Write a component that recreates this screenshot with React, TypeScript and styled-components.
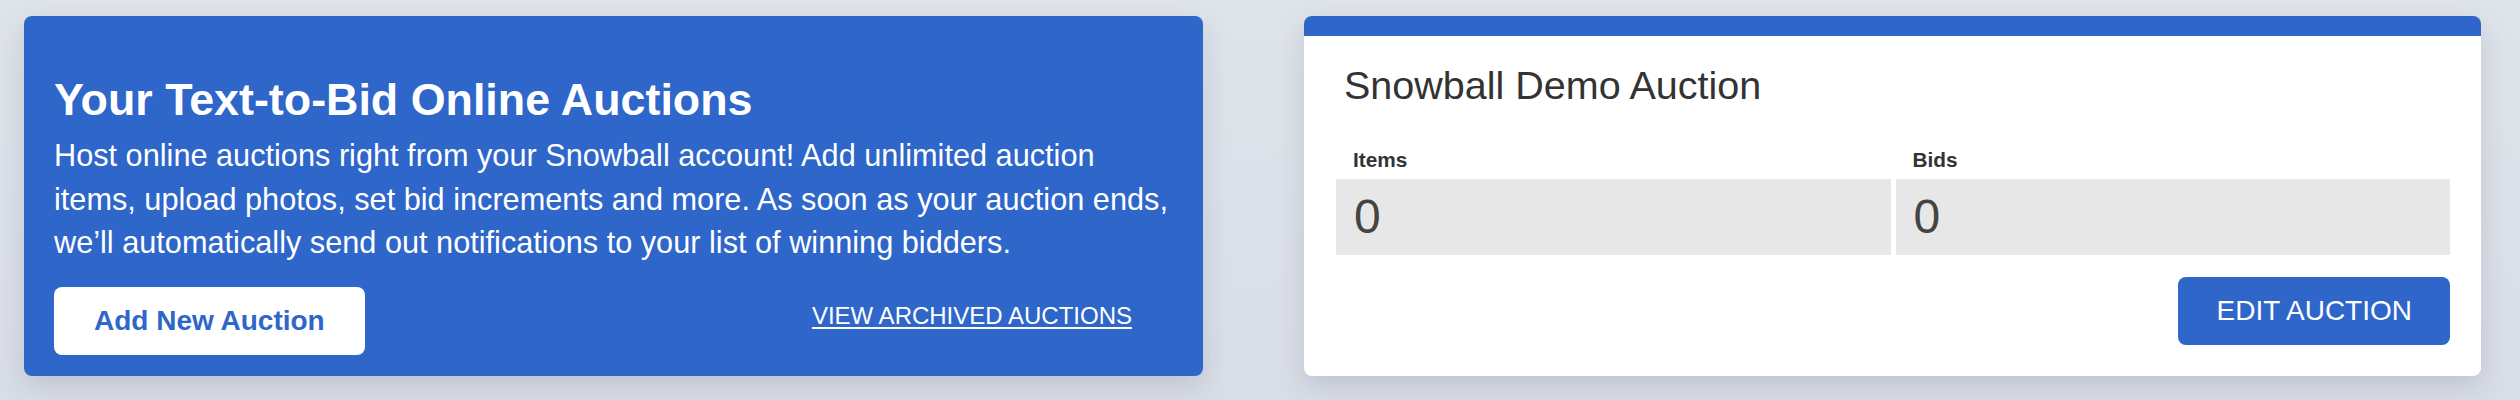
import React from "react";
import styled, { createGlobalStyle } from "styled-components";

const GlobalStyle = createGlobalStyle`
  *, *::before, *::after {
    box-sizing: border-box;
  }
  html, body {
    margin: 0;
    padding: 0;
    overflow: hidden;
    background: #dbdfe8;
    font-family: "Liberation Sans", Arial, Helvetica, sans-serif;
  }
`;

const BLUE = "#2e66ca";

export const Page = styled.div`
    display: flex;
    align-items: flex-start;
    gap: 101px;
    height: 400px;
    padding: 16px 0 0 24px;
    background: linear-gradient(180deg, #dfe3ea 0%, #d9dde6 100%);
`;

export const PromoCard = styled.section`
    flex: 0 0 1179px;
    height: 360px;
    display: flex;
    flex-direction: column;
    background: ${BLUE};
    border-radius: 8px;
    padding: 56px 20px 22px 30px;
    box-shadow: 0 10px 26px rgba(60, 70, 100, 0.17);
    color: #fff;
`;

export const PromoTitle = styled.h2`
    margin: 0;
    font-size: 44.8px;
    line-height: 54px;
    font-weight: 700;
`;

export const PromoText = styled.p`
    margin: 8px 0 0 0;
    font-size: 30.7px;
    line-height: 43.5px;
    white-space: nowrap;
`;

export const PromoFooter = styled.div`
    display: flex;
    align-items: center;
    justify-content: space-between;
    margin-top: 22px;
`;

export const WhiteButton = styled.button`
    height: 68px;
    padding: 0 40px;
    border: 0;
    border-radius: 8px;
    background: #fff;
    color: ${BLUE};
    font-family: inherit;
    font-size: 28px;
    font-weight: 700;
    cursor: pointer;
`;

export const ArchiveLink = styled.a`
    color: #fff;
    font-size: 24px;
    text-decoration: underline;
    text-underline-offset: 3px;
    margin: 0 51px 10px 0;
    cursor: pointer;
`;

export const AuctionCard = styled.section`
    flex: 0 0 1177px;
    height: 360px;
    display: flex;
    flex-direction: column;
    background: #fff;
    border-top: 20px solid ${BLUE};
    border-radius: 8px;
    padding: 24px 31px 30px 32px;
    box-shadow: 0 10px 26px rgba(60, 70, 100, 0.17);
`;

export const AuctionTitle = styled.h3`
    margin: 0 0 0 8px;
    font-size: 39.5px;
    line-height: 50px;
    font-weight: 400;
    color: #333;
`;

export const StatsGrid = styled.div`
    display: grid;
    grid-template-columns: 1fr 1fr;
    column-gap: 5px;
    row-gap: 7px;
    margin-top: 38px;
`;

export const StatLabel = styled.div`
    padding-left: 17px;
    font-size: 20.8px;
    line-height: 24px;
    font-weight: 700;
    color: #333;
`;

export const StatValue = styled.div`
    height: 76px;
    display: flex;
    align-items: center;
    padding-left: 18px;
    background: #e7e7e7;
    font-size: 48px;
    line-height: 1;
    color: #444;
`;

export const CardActions = styled.div`
    display: flex;
    justify-content: flex-end;
    margin-top: 22px;
`;

export const BlueButton = styled.button`
    height: 68px;
    padding: 0 38px;
    border: 0;
    border-radius: 8px;
    background: ${BLUE};
    color: #fff;
    font-family: inherit;
    font-size: 28px;
    font-weight: 400;
    cursor: pointer;
`;

const stats = [
    { label: "Items", value: 0 },
    { label: "Bids", value: 0 },
];

export default function App() {
    return (
        <>
            <GlobalStyle />
            <Page>
                <PromoCard>
                    <PromoTitle>Your Text-to-Bid Online Auctions</PromoTitle>
                    <PromoText>
                        Host online auctions right from your Snowball account! Add unlimited auction
                        <br />
                        items, upload photos, set bid increments and more. As soon as your auction ends,
                        <br />
                        we’ll automatically send out notifications to your list of winning bidders.
                    </PromoText>
                    <PromoFooter>
                        <WhiteButton>Add New Auction</WhiteButton>
                        <ArchiveLink>VIEW ARCHIVED AUCTIONS</ArchiveLink>
                    </PromoFooter>
                </PromoCard>

                <AuctionCard>
                    <AuctionTitle>Snowball Demo Auction</AuctionTitle>
                    <StatsGrid>
                        {stats.map((s) => (
                            <StatLabel key={s.label + "-l"}>{s.label}</StatLabel>
                        ))}
                        {stats.map((s) => (
                            <StatValue key={s.label + "-v"}>{s.value}</StatValue>
                        ))}
                    </StatsGrid>
                    <CardActions>
                        <BlueButton>EDIT AUCTION</BlueButton>
                    </CardActions>
                </AuctionCard>
            </Page>
        </>
    );
}
